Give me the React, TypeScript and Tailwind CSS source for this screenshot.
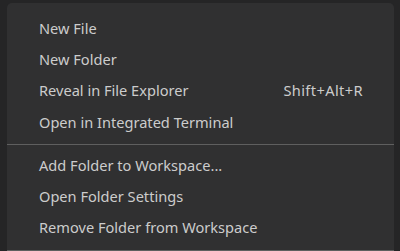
const groups = [
  [
    { label: 'New File' },
    { label: 'New Folder' },
    { label: 'Reveal in File Explorer', shortcut: 'Shift+Alt+R' },
    { label: 'Open in Integrated Terminal' },
  ],
  [
    { label: 'Add Folder to Workspace...' },
    { label: 'Open Folder Settings' },
    { label: 'Remove Folder from Workspace' },
  ],
];

export default function App() {
  return (
    <div
      className="w-[400px] h-[251px] overflow-hidden bg-[#252526] pt-[3px] pl-[7px]"
      style={{ fontFamily: '"Noto Sans", "Open Sans", sans-serif' }}
    >
      <div className="w-[387px] h-[260px] rounded-[5px] bg-[#303031] pt-[10.4px] text-[#cccccc] text-[14.6px]">
        {groups.map((items, gi) => (
          <div key={gi}>
            {gi > 0 && (
              <div className="h-[12px] flex items-center">
                <div className="h-px w-full bg-[#5f5f5f]" />
              </div>
            )}
            {items.map((it) => (
              <div
                key={it.label}
                className="h-[31.2px] flex items-center justify-between pl-[32px] pr-[31px]"
              >
                <span>{it.label}</span>
                {it.shortcut && <span className="tracking-[0.4px]">{it.shortcut}</span>}
              </div>
            ))}
          </div>
        ))}
        <div className="h-px w-full mt-[6px] bg-[#5f5f5f]" />
      </div>
    </div>
  );
}
